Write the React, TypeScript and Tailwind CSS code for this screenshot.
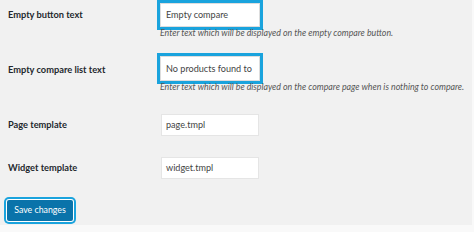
import React from "react";

function Label({ children, h }: { children: React.ReactNode; h: string }) {
  return (
    <div className={`w-[152px] shrink-0 flex items-center text-[9.25px] font-bold text-[#23282d] ${h}`}>
      {children}
    </div>
  );
}

export default function App() {
  return (
    <div className="w-[474px] h-[232px] bg-[#f9f9f9] font-['Lato',sans-serif]">
      <div className="w-[472px] h-[225px] bg-[#f1f1f1] pl-2 pt-[3px]">
        {/* Row 1 */}
        <div className="flex">
          <Label h="h-[24px]">Empty button text</Label>
          <div className="flex flex-col">
            <div className="w-[100px] h-[24px] bg-white border border-[#ddd] ring-[3px] ring-[#1aa3dd] flex items-center pl-[5px] text-[9.1px] text-[#444]">
              Empty compare
            </div>
            <div className="text-[8.8px] italic text-[#555] leading-[12px] whitespace-nowrap">
              Enter text which will be displayed on the empty compare button.
            </div>
          </div>
        </div>
        {/* Row 2 */}
        <div className="flex mt-[17px]">
          <Label h="h-[25px] pt-[2px]">Empty compare list text</Label>
          <div className="flex flex-col">
            <div className="w-[100px] h-[25px] bg-white border border-[#ddd] ring-[3px] ring-[#1aa3dd] flex items-center pl-[5px] text-[9.1px] text-[#444] whitespace-nowrap overflow-hidden">
              No products found to
            </div>
            <div className="text-[8.8px] italic text-[#555] leading-[12px] whitespace-nowrap">
              Enter text which will be displayed on the compare page when is nothing to compare.
            </div>
          </div>
        </div>
        {/* Row 3 */}
        <div className="flex mt-[21px]">
          <Label h="h-[22px]">Page template</Label>
          <div className="w-[98px] h-[22px] ml-[1px] bg-white border border-[#e5e5e5] flex items-center pl-[4px] text-[9.1px] text-[#444]">
            page.tmpl
          </div>
        </div>
        {/* Row 4 */}
        <div className="flex mt-[21px]">
          <Label h="h-[22px]">Widget template</Label>
          <div className="w-[98px] h-[22px] ml-[1px] bg-white border border-[#e5e5e5] flex items-center pl-[4px] text-[9.1px] text-[#444]">
            widget.tmpl
          </div>
        </div>
        {/* Button */}
        <div className="mt-[21px] ml-[-1px]">
          <button className="w-[66px] h-[21px] bg-[#0a73aa] text-white text-[8.8px] rounded-[2px] ring-2 ring-[#1aa3dd] ring-offset-1 ring-offset-white flex items-center justify-center leading-none whitespace-nowrap">
            Save changes
          </button>
        </div>
      </div>
    </div>
  );
}
